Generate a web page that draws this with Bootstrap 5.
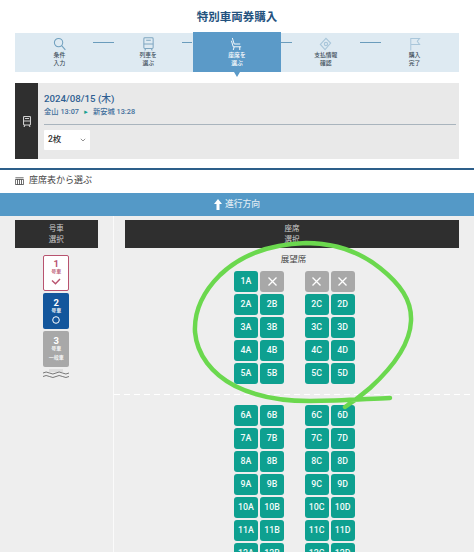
<!DOCTYPE html>
<html lang="ja">
<head>
<meta charset="utf-8">
<title>特別車両券購入</title>
<link href="https://cdn.jsdelivr.net/npm/bootstrap@5.3.0/dist/css/bootstrap.min.css" rel="stylesheet">
<style>
html,body{height:552px;overflow:hidden;background:#fff}
body{position:relative;font-family:Roboto,"Noto Sans CJK JP",sans-serif;color:#333}
.page-title{height:33px;margin:0;font-size:11.5px;font-weight:700;line-height:34px;color:#24527e;text-align:center}
.stepper{height:39px;margin:0 15px;background:#deeaf2}
.step{position:relative;width:89px;color:#3f4f5c;font-size:5.8px;line-height:7.5px;text-align:center;padding-top:4px;font-weight:500}
.step svg{display:block;margin:0 auto 1px;width:13px;height:14px}
.step-on{height:40px;margin-top:-1px;background:#5b9ac8;color:#fff;padding-top:5px}
.step-on::after{content:"";position:absolute;left:50%;bottom:-5px;margin-left:-3px;border:3px solid transparent;border-top:5px solid #5b9ac8;border-bottom:0}
.dash{position:absolute;top:8.500px;height:1.500px;background:#6a9cbc}
.trip{height:76px;margin:11px 15px 0;background:#e9e9e9}
.trip-side{width:23px;background:#2f2f2f}
.trip-body{padding:9px 3px 0 6px}
.trip-date{font-size:9.700px;font-weight:500;line-height:14px;color:#2f5f92}
.trip-route{font-size:7.300px;font-weight:500;line-height:10px;margin-top:1px;color:#3f6e9b}
.trip-arrow{color:#19a08f;font-size:6px;margin:0 4px}
.trip-rule{height:1px;margin:6.500px 0 5px;background:#a9b4bd}
.qty{width:46px;height:20px;padding:0 4px;background:#fff;font-size:8.500px;font-weight:500;border-radius:1px}
.section-line{height:1.500px;margin-top:9px;background:#2d5f8a}
.section-head{height:23px;padding-left:15px;font-size:9px;color:#444;gap:5px}
.dir-bar{height:23px;background:#5499c7;color:#dfeaf2;font-size:8.800px;font-weight:500;gap:3px}
.dir-text{padding-top:1px}
.seat-zone{height:340px;background:#eee}
.car-col{width:113.500px;padding:4.500px 15px 0;border-right:1px solid #fafafa;flex:none}
.black-head{height:27.500px;background:#2f2f2f;color:#ccc;font-size:7.500px;line-height:11px;text-align:center;padding-top:2.500px}
.car-btn{width:26px;height:36px;margin:0 auto 2px;border-radius:2px;color:#fff;text-align:center;font-weight:700;font-size:9.500px;line-height:9px;padding-top:4.500px}
.car-btn small,.car-btn em{display:block;font-size:5px;line-height:7px;font-style:normal;font-weight:500}
.car-first{margin-top:7.500px;background:#fff;border:1.500px solid #b8536f;color:#b8536f;padding-top:3px}
.car-two{background:#13569c}
.car-three{background:#a8a8a8}
.car-three em{margin-top:2.700px}
.car-mark{display:block;margin:2.500px auto 0}
.seat-col{flex:1;padding:4.500px 15px 0 11.500px;min-width:0}
.view-label{height:23.500px;font-size:8.500px;line-height:23px;text-align:center;color:#444;padding-left:3px}
.seat-grid{padding-left:109px}
.seat-row{gap:2px;margin-bottom:2px;height:21px}
.seat{width:24px;height:21px;border-radius:3px;background:#0ea090;color:#f2fbfa;font-size:8.800px;font-weight:500;line-height:21px;text-align:center}
.seat-off{background:#a8a8a8}
.aisle{width:16.600px;flex:none}
.divider{height:1.500px;margin:9.500px -15px 9.500px -11.500px;background:repeating-linear-gradient(90deg,#fff 0 6px,transparent 6px 10px)}
.circle{position:absolute;left:0;top:0;width:474px;height:552px;pointer-events:none}
</style>
</head>
<body>
<h1 class="page-title">特別車両券購入</h1>

<div class="stepper d-flex position-relative">
  <div class="step">
    <svg viewBox="0 0 14 15" fill="none" stroke="#6f9fbe" stroke-width="1.100"><circle cx="6" cy="6" r="4.500"/><path d="M9.300 9.300l4 4.500"/></svg>
    条件<br>入力
  </div>
  <span class="dash" style="left:78px;width:21px"></span>
  <div class="step">
    <svg viewBox="0 0 14 15" fill="none" stroke="#7fa6c0" stroke-width="1.100"><rect x="2" y=".8" width="10" height="11.500" rx="1"/><path d="M2 7.500h10M4.500 3.500h5M4 12.300l-1 2.200M10 12.300l1 2.200"/></svg>
    列車を<br>選ぶ
  </div>
  <span class="dash" style="left:167px;width:10px"></span>
  <div class="step step-on">
    <svg viewBox="0 0 14 15" fill="none" stroke="#fff" stroke-width="1"><path d="M2.500 1l2 6.500h6.500M1.500 4l2 6.500h8.500M4.500 10.500l-1 3.500M10.500 10.500v3.500"/></svg>
    座席を<br>選ぶ
  </div>
  <span class="dash" style="left:266px;width:11px"></span>
  <div class="step">
    <svg viewBox="0 0 14 15" fill="none" stroke="#a9c6da" stroke-width="1.200"><path d="M1.500 8l6-6.500 5 5-6 7z"/><circle cx="7.500" cy="7.500" r="1.800"/></svg>
    支払情報<br>確認
  </div>
  <span class="dash" style="left:345px;width:21px"></span>
  <div class="step">
    <svg viewBox="0 0 14 15" fill="none" stroke="#a9c6da" stroke-width="1.100"><path d="M3 14.500V1.500h9.500l-2.500 3 2.500 3.500H3"/></svg>
    購入<br>完了
  </div>
</div>

<div class="trip d-flex">
  <div class="trip-side d-flex align-items-center justify-content-center">
    <svg width="8" height="11" viewBox="0 0 8 11" fill="none" stroke="#cfcfcf" stroke-width="1.100"><rect x=".5" y=".5" width="7" height="8.500" rx="1"/><path d="M.5 5h7M2 2.500h4M2 9l-1 2M6 9l1 2"/></svg>
  </div>
  <div class="trip-body flex-grow-1">
    <div class="trip-date">2024/08/15 (木)</div>
    <div class="trip-route">金山 13:07<span class="trip-arrow">►</span>新安城 13:28</div>
    <div class="trip-rule"></div>
    <div class="qty d-flex align-items-center justify-content-between">2枚
      <svg width="6" height="4" viewBox="0 0 6 4" fill="none" stroke="#777" stroke-width=".8"><path d="M.8 .8L3 3l2.200-2.200"/></svg>
    </div>
  </div>
</div>

<div class="section-line"></div>
<div class="section-head d-flex align-items-center">
  <svg width="9" height="8" viewBox="0 0 9 8" fill="none" stroke="#444" stroke-width=".8"><path d="M.4 .8h8.200M.4 2.500h8.200v5H.4zM2.500 2.500v5M4.500 2.500v5M6.500 2.500v5"/></svg>
  <span>座席表から選ぶ</span>
</div>
<div class="dir-bar d-flex align-items-center justify-content-center">
  <svg width="8" height="11" viewBox="0 0 8 11" fill="#fff"><path d="M4 0l4 5H5.500v6h-3V5H0z"/></svg>
  <span class="dir-text">進行方向</span>
</div>

<div class="seat-zone d-flex">
  <div class="car-col">
    <div class="black-head">号車<br>選択</div>
    <div class="car-btn car-first">1<small>号車</small>
      <svg class="car-mark" width="10" height="7" viewBox="0 0 10 7" fill="none" stroke="#b8536f" stroke-width="1.400"><path d="M1 2.500l3.500 3.300L9 1"/></svg>
    </div>
    <div class="car-btn car-two">2<small>号車</small>
      <svg class="car-mark" width="8" height="8" viewBox="0 0 8 8" fill="none" stroke="#fff" stroke-width="1"><circle cx="4" cy="4" r="3.300"/></svg>
    </div>
    <div class="car-btn car-three">3<small>号車</small><em>一般車</em></div>
    <svg class="d-block mx-auto" width="28" height="9" viewBox="0 0 28 9" fill="none" stroke="#444" stroke-width=".7"><rect x="7" y="0" width="14" height="3" fill="#ddd" stroke="none"/><path d="M1 4q3-2 6.500 0t6.500 0 6.500 0 6.500 0M1 7.500q3-2 6.500 0t6.500 0 6.500 0 6.500 0"/></svg>
  </div>
  <div class="seat-col">
    <div class="black-head">座席<br>選択</div>
    <div class="view-label">展望席</div>
    <div class="seat-grid">
      <div class="seat-row d-flex"><div class="seat">1A</div><div class="seat seat-off"><svg width="9" height="9" viewBox="0 0 9 9" fill="none" stroke="#fff" stroke-width="1.300"><path d="M.5 .5l8 8M8.500 .5l-8 8"/></svg></div><div class="aisle"></div><div class="seat seat-off"><svg width="9" height="9" viewBox="0 0 9 9" fill="none" stroke="#fff" stroke-width="1.300"><path d="M.5 .5l8 8M8.500 .5l-8 8"/></svg></div><div class="seat seat-off"><svg width="9" height="9" viewBox="0 0 9 9" fill="none" stroke="#fff" stroke-width="1.300"><path d="M.5 .5l8 8M8.500 .5l-8 8"/></svg></div></div>
      <div class="seat-row d-flex"><div class="seat">2A</div><div class="seat">2B</div><div class="aisle"></div><div class="seat">2C</div><div class="seat">2D</div></div>
      <div class="seat-row d-flex"><div class="seat">3A</div><div class="seat">3B</div><div class="aisle"></div><div class="seat">3C</div><div class="seat">3D</div></div>
      <div class="seat-row d-flex"><div class="seat">4A</div><div class="seat">4B</div><div class="aisle"></div><div class="seat">4C</div><div class="seat">4D</div></div>
      <div class="seat-row d-flex"><div class="seat">5A</div><div class="seat">5B</div><div class="aisle"></div><div class="seat">5C</div><div class="seat">5D</div></div>
    </div>
    <div class="divider"></div>
    <div class="seat-grid">
      <div class="seat-row d-flex"><div class="seat">6A</div><div class="seat">6B</div><div class="aisle"></div><div class="seat">6C</div><div class="seat">6D</div></div>
      <div class="seat-row d-flex"><div class="seat">7A</div><div class="seat">7B</div><div class="aisle"></div><div class="seat">7C</div><div class="seat">7D</div></div>
      <div class="seat-row d-flex"><div class="seat">8A</div><div class="seat">8B</div><div class="aisle"></div><div class="seat">8C</div><div class="seat">8D</div></div>
      <div class="seat-row d-flex"><div class="seat">9A</div><div class="seat">9B</div><div class="aisle"></div><div class="seat">9C</div><div class="seat">9D</div></div>
      <div class="seat-row d-flex"><div class="seat">10A</div><div class="seat">10B</div><div class="aisle"></div><div class="seat">10C</div><div class="seat">10D</div></div>
      <div class="seat-row d-flex"><div class="seat">11A</div><div class="seat">11B</div><div class="aisle"></div><div class="seat">11C</div><div class="seat">11D</div></div>
      <div class="seat-row d-flex"><div class="seat">12A</div><div class="seat">12B</div><div class="aisle"></div><div class="seat">12C</div><div class="seat">12D</div></div>
    </div>
  </div>
</div>

<svg class="circle" viewBox="0 0 474 552" fill="none" stroke="#6bd84e" stroke-width="4.500" stroke-linecap="round" stroke-linejoin="round">
  <path d="M390 398C365 399 340 401 310 401C280 401 255 396 235 386C212 374 197 355 195 332C194 312 203 292 220 275C242 254 270 244 306 243C335 243 360 252 380 268C400 284 412 300 411 321C410 345 392 368 370 388C362 395 354 401 345 407"/>
</svg>

<script src="https://cdn.jsdelivr.net/npm/bootstrap@5.3.0/dist/js/bootstrap.bundle.min.js"></script>
</body>
</html>
